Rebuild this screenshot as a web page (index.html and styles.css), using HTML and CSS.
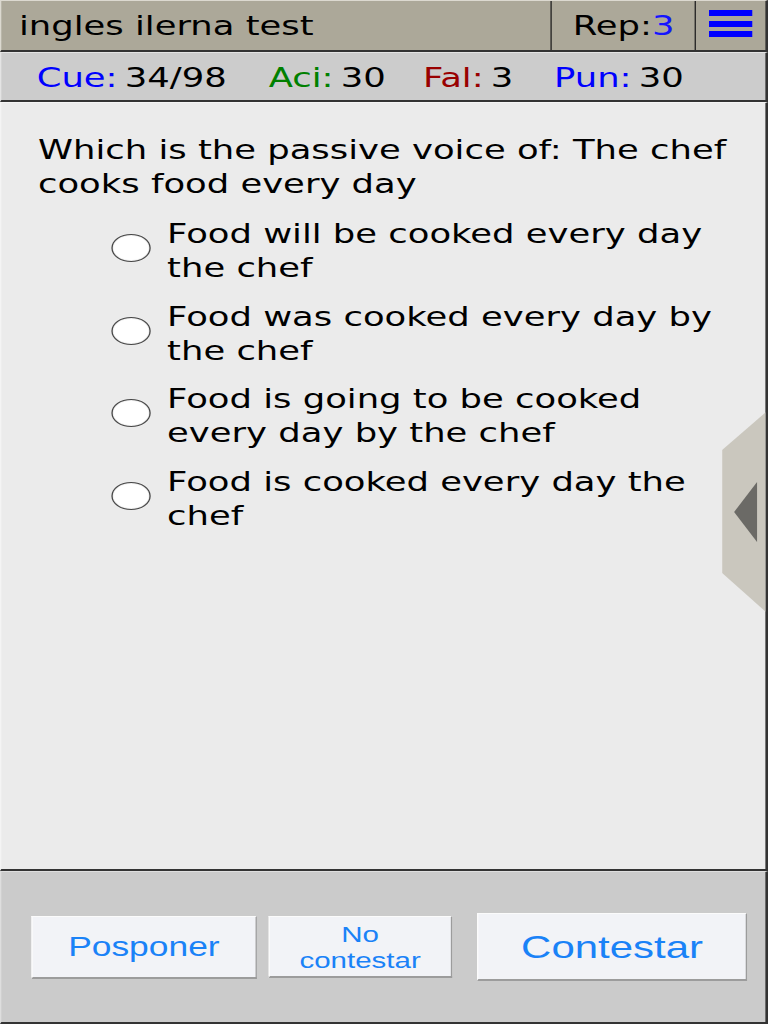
FILE: index.html
```html
<!DOCTYPE html>
<html lang="es">
<head>
<meta charset="utf-8">
<title>ingles ilerna test</title>
<link rel="stylesheet" href="styles.css">
</head>
<body>
<div class="app">
  <header class="topbar">
    <div class="title">ingles ilerna test</div>
    <div class="rep">Rep:<span class="rep-num">3</span></div>
    <div class="menu" aria-label="menu">
      <span class="bar"></span><span class="bar"></span><span class="bar"></span>
    </div>
  </header>
  <div class="stats">
    <span class="stat stat-cue"><span class="label">Cue:</span><span class="value">34/98</span></span>
    <span class="stat stat-aci"><span class="label">Aci:</span><span class="value">30</span></span>
    <span class="stat stat-fal"><span class="label">Fal:</span><span class="value">3</span></span>
    <span class="stat stat-pun"><span class="label">Pun:</span><span class="value">30</span></span>
  </div>
  <main class="content">
    <p class="question">Which is the passive voice of: The chef cooks food every day</p>
    <ul class="options">
      <li class="option"><span class="radio"></span><span class="option-text">Food will be cooked every day the chef</span></li>
      <li class="option"><span class="radio"></span><span class="option-text">Food was cooked every day by the chef</span></li>
      <li class="option"><span class="radio"></span><span class="option-text">Food is going to be cooked every day by the chef</span></li>
      <li class="option"><span class="radio"></span><span class="option-text">Food is cooked every day the chef</span></li>
    </ul>
    <div class="side-tab">
      <svg viewBox="0 0 44 200" preserveAspectRatio="none">
        <polygon points="0,38 44,0 44,200 0,161" fill="#cac7be"/>
        <polygon points="12,100 35,70 35,130" fill="#6b6a66"/>
      </svg>
    </div>
  </main>
  <footer class="actions">
    <button class="btn btn-posponer">Posponer</button>
    <button class="btn btn-no">No<br>contestar</button>
    <button class="btn btn-contestar">Contestar</button>
  </footer>
</div>
</body>
</html>
```
FILE: styles.css
```css
html, body {
  margin: 0;
  padding: 0;
}
body {
  width: 768px;
  height: 1024px;
  overflow: hidden;
  background: #333;
  font-family: "DejaVu Sans", Verdana, sans-serif;
  color: #000;
}
.app {
  width: 586px;
  height: 1024px;
  display: flex;
  flex-direction: column;
  transform: scaleX(1.31058);
  transform-origin: 0 0;
}

/* top bar */
.topbar {
  box-sizing: border-box;
  height: 52px;
  flex: none;
  display: flex;
  background: #aca899;
  border-top: 1px solid #dcd9d0;
  border-left: 1px solid #dcd9d0;
  border-right: 2px solid #333;
  border-bottom: 2px solid #333;
  font-size: 27px;
  line-height: 49px;
  white-space: nowrap;
}
.title {
  flex: 1;
  padding-left: 13.5px;
}
.rep {
  width: 109px;
  border-left: 1px solid #222;
  text-align: center;
}
.rep-num {
  color: #1414ff;
}
.menu {
  box-sizing: border-box;
  width: 53.7px;
  border-left: 1px solid #222;
  display: flex;
  flex-direction: column;
  align-items: center;
  gap: 4.5px;
  padding-top: 9px;
}
.bar {
  display: block;
  width: 33px;
  height: 6px;
  background: #0000ff;
}

/* stats */
.stats {
  box-sizing: border-box;
  height: 50px;
  flex: none;
  display: flex;
  background: #cccccc;
  border-top: 1px solid #e4e4e4;
  border-left: 1px solid #e4e4e4;
  border-right: 2px solid #333;
  border-bottom: 2px solid #333;
  padding: 2px 0 0 27px;
  font-size: 27px;
  line-height: 45px;
  white-space: nowrap;
}
.value {
  margin-left: 5.5px;
}
.stat-cue .label { color: #0000ff; }
.stat-aci { margin-left: 32px; }
.stat-aci .label { color: #008000; }
.stat-fal { margin-left: 28.5px; }
.stat-fal .label { color: #990000; }
.stat-pun { margin-left: 31px; }
.stat-pun .label { color: #0000ff; }

/* question area */
.content {
  position: relative;
  box-sizing: border-box;
  height: 769px;
  flex: none;
  background: #ebebeb;
  border-top: 1px solid #f4f4f4;
  border-left: 1px solid #f4f4f4;
  border-right: 2px solid #333;
  border-bottom: 2px solid #333;
  padding: 30px 20px 0 28px;
  font-size: 27px;
  line-height: 34px;
}
.question {
  margin: 0;
}
.options {
  list-style: none;
  margin: 16px 0 0 55.7px;
  padding: 0;
}
.option {
  display: flex;
  align-items: flex-start;
  margin-bottom: 14.5px;
}
.radio {
  flex: none;
  box-sizing: border-box;
  width: 30.5px;
  height: 28px;
  margin-top: 17px;
  margin-right: 12.3px;
  border: 1.6px solid #474747;
  border-radius: 50%;
  background: #fff;
  box-shadow: inset 0 0 1px #888;
}
.option-text {
  width: 430px;
}
.side-tab {
  position: absolute;
  right: 0;
  top: 309px;
  width: 33.5px;
  height: 200px;
}
.side-tab svg {
  display: block;
  width: 100%;
  height: 100%;
}

/* bottom actions */
.actions {
  box-sizing: border-box;
  height: 153px;
  flex: none;
  display: flex;
  align-items: center;
  background: #cbcbcb;
  border-top: 1px solid #dedede;
  border-left: 1px solid #dedede;
  border-right: 2px solid #333;
  border-bottom: 2px solid #333;
  padding-left: 22.6px;
}
.btn {
  box-sizing: border-box;
  margin: 0;
  padding: 0;
  font-family: "Liberation Sans", Arial, sans-serif;
  color: #1a82f7;
  background: #f2f3f7;
  border-style: solid;
  border-width: 1px 1.5px 2px 1px;
  border-color: #fbfbfb #9c9c9c #9c9c9c #fbfbfb;
  text-align: center;
}
.btn-posponer {
  width: 172.4px;
  height: 63px;
  padding-top: 2px;
  font-size: 27px;
}
.btn-no {
  width: 139.6px;
  height: 62px;
  margin-left: 9px;
  padding-top: 3px;
  font-size: 22.5px;
  line-height: 1.15;
}
.btn-contestar {
  width: 206.8px;
  height: 68px;
  margin-left: 19px;
  padding-top: 2px;
  font-size: 32px;
}
```
